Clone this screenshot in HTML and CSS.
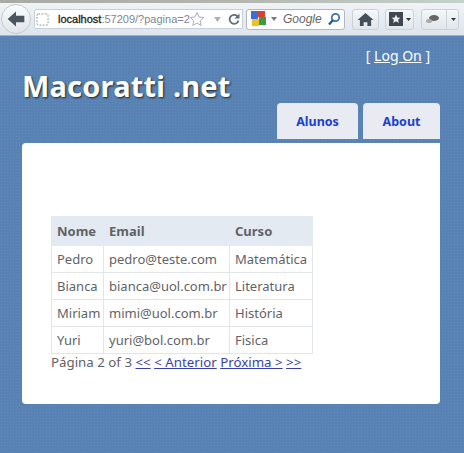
FILE: index.html
```html
<!DOCTYPE html>
<html lang="pt">
<head>
<meta charset="utf-8">
<title>Macoratti .net</title>
<link rel="stylesheet" href="styles.css">
</head>
<body>
<div class="tabstrip"></div>
<div class="toolbar">
  <div class="back"><svg width="20" height="20" viewBox="0 0 24 24"><path d="M2 12l10-9v5h10v8H12v5z" fill="#4a5560"/></svg></div>
  <div class="urlbar">
    <svg class="favicon" width="13" height="13" viewBox="0 0 14 14"><rect x="1" y="1" width="12" height="12" rx="1.5" fill="none" stroke="#8a8a8a" stroke-dasharray="2 1.5"/></svg>
    <div class="urlfield">
      <span class="url"><b>localhost</b>:57209/?pagina=2</span>
      <svg class="star" width="16" height="16" viewBox="0 0 16 16"><path d="M8 1.500l2 4.500 4.800.5-3.600 3.200 1 4.800L8 12l-4.200 2.500 1-4.800L1.200 6.500 6 6z" fill="#fff" stroke="#a8b0b8"/></svg>
      <svg class="drop" width="7" height="5" viewBox="0 0 8 6"><path d="M0 0h8L4 6z" fill="#a8b0b8"/></svg>
      <svg class="reload" width="12" height="12" viewBox="0 0 12 12"><path d="M10 4A4.500 4.500 0 1 0 10.500 7.500" fill="none" stroke="#5f6b76" stroke-width="1.800"/><path d="M11.500 0.500v5h-5z" fill="#5f6b76"/></svg>
    </div>
  </div>
  <div class="search">
    <svg width="18" height="18" viewBox="0 0 18 18"><rect x="1" y="1" width="7" height="8" fill="#3b6fd4"/><rect x="8" y="1" width="7" height="6" fill="#d8402f"/><rect x="9" y="7" width="7" height="8" fill="#3f9a3f"/><rect x="2" y="9" width="7" height="7" fill="#efc02c"/></svg>
    <svg class="sdrop" width="6" height="4" viewBox="0 0 6 4"><path d="M0 0h6L3 4z" fill="#777"/></svg>
    <span class="google">Google</span>
    <svg class="lens" width="14" height="14" viewBox="0 0 14 14"><circle cx="8.500" cy="5.500" r="3.700" fill="none" stroke="#3d73a8" stroke-width="1.800"/><path d="M6 8l-4 4.500" stroke="#2c5a88" stroke-width="2.400"/></svg>
  </div>
  <div class="tool home"><svg width="17" height="15" viewBox="0 0 18 16"><path d="M9 1L0.500 8.500H3V15h4v-4h4v4h4V8.500h2.500z" fill="#444f5a"/></svg></div>
  <div class="tool bookmarks"><svg width="14" height="14" viewBox="0 0 14 14"><rect width="14" height="14" fill="#3f4750"/><path d="M7 2.500l1.300 2.900 3.100.3-2.300 2.100.7 3.100L7 9.300 4.200 10.900l.7-3.100-2.300-2.100 3.100-.3z" fill="#eee"/></svg><svg width="5" height="3" viewBox="0 0 5 3"><path d="M0 0h5L2.500 3z" fill="#333"/></svg></div>
  <div class="tool addon"><svg width="16" height="14" viewBox="0 0 16 14"><ellipse cx="9" cy="6" rx="5" ry="3" fill="#666"/><ellipse cx="4" cy="9" rx="3" ry="2" fill="#aaa"/></svg><i class="sep"></i><svg width="5" height="3" viewBox="0 0 5 3"><path d="M0 0h5L2.500 3z" fill="#333"/></svg></div>
</div>
<div class="page">
  <div class="login">[ <a href="#">Log On</a> ]</div>
  <h1 class="brand">Macoratti .net</h1>
  <nav class="menu">
    <a class="tab tab-alunos" href="#">Alunos</a>
    <a class="tab tab-about" href="#">About</a>
  </nav>
  <main class="card">
    <table class="grid">
      <thead>
        <tr><th class="c1">Nome</th><th class="c2">Email</th><th class="c3">Curso</th></tr>
      </thead>
      <tbody>
        <tr><td>Pedro</td><td>pedro@teste.com</td><td>Matemática</td></tr>
        <tr><td>Bianca</td><td>bianca@uol.com.br</td><td>Literatura</td></tr>
        <tr><td>Miriam</td><td>mimi@uol.com.br</td><td>História</td></tr>
        <tr><td>Yuri</td><td>yuri@bol.com.br</td><td>Fisica</td></tr>
      </tbody>
    </table>
    <p class="pager">Página 2 of 3 <a href="#">&lt;&lt;</a> <a href="#">&lt; Anterior</a> <a href="#">Próxima &gt;</a> <a href="#">&gt;&gt;</a></p>
  </main>
</div>
</body>
</html>
```
FILE: styles.css
```css
* { box-sizing: border-box; }
html, body { margin: 0; padding: 0; }
body {
  width: 464px;
  height: 453px;
  overflow: hidden;
  font-family: "Noto Sans", "DejaVu Sans", sans-serif;
  background-color: #5782b3;
  background-image: radial-gradient(rgba(255,255,255,.07) 1px, transparent 1px);
  background-size: 3px 3px;
}
.tabstrip {
  height: 3px;
  background: linear-gradient(90deg, #a9a9a6 0, #b5b5b0 50%, #c4d2cb 100%);
}
.toolbar {
  height: 33px;
  display: flex;
  align-items: center;
  padding-left: 1px;
  background: linear-gradient(#f0f3f6, #dde5ec);
  border-bottom: 1px solid #9fb2c3;
}
.back {
  width: 30px;
  height: 30px;
  flex: none;
  border-radius: 50%;
  display: flex;
  align-items: center;
  justify-content: center;
  background: linear-gradient(#fbfcfd, #dfe5ea);
  border: 1px solid #c3ccd4;
}
.urlbar {
  display: flex;
  align-items: center;
  width: 209px;
  flex: none;
  margin-left: 3px;
  height: 20px;
  background: #fff;
  border: 1px solid #c5d0da;
  border-radius: 2px 0 0 2px;
}
.favicon { flex: none; margin: 0 4px 0 1px; }
.urlfield {
  flex: 1;
  height: 18px;
  display: flex;
  align-items: center;
  padding-left: 5px;
  font: 11px "Liberation Sans", sans-serif;
  color: #7b8794;
  min-width: 0;
}
.url { width: 126px; white-space: nowrap; flex: none; }
.url b { font-weight: normal; color: #222; -webkit-text-stroke: .3px #222; }
.star { margin-left: 5px; flex: none; }
.drop { margin-left: 9px; flex: none; }
.reload { margin-left: 7px; flex: none; }
.search {
  margin-left: 3px;
  width: 99px;
  height: 21px;
  display: flex;
  align-items: center;
  padding-left: 3px;
  background: #fff;
  border: 1px solid #aeb9c4;
  border-radius: 3px;
  flex: none;
}
.sdrop { margin-left: 3px; }
.google {
  font: italic 12px "Liberation Sans", sans-serif;
  color: #666;
  margin-left: 6px;
  flex: 1;
}
.lens { margin-right: 3px; }
.tool {
  height: 21px;
  flex: none;
  display: flex;
  align-items: center;
  justify-content: center;
  gap: 3px;
  border: 1px solid #c9d1d9;
  border-radius: 3px;
  background: linear-gradient(#f5f7f9, #e0e6ec);
}
.home { width: 27px; margin-left: 7px; }
.bookmarks { width: 29px; margin-left: 6px; }
.addon { width: 38px; margin-left: 7px; }
.sep { width: 1px; height: 19px; background: #c9d1d9; margin: 0 1px 0 2px; }

.page { padding: 0 24px 0 22px; }
.login {
  height: 36px;
  padding-top: 10px;
  padding-right: 10px;
  text-align: right;
  font-size: 14px;
  line-height: 20px;
  color: #fff;
}
.login a { color: #fff; }
.brand {
  margin: 0;
  height: 31px;
  font-size: 29px;
  line-height: 27px;
  font-weight: 700;
  letter-spacing: .2px;
  color: #fff;
  text-shadow: 1px 1px 2px #222;
}
.menu {
  display: flex;
  justify-content: flex-end;
  gap: 5px;
  height: 40px;
}
.tab {
  height: 36px;
  display: flex;
  align-items: center;
  justify-content: center;
  font-size: 12.500px;
  font-weight: 700;
  color: #1c3fd0;
  text-decoration: none;
  background: #e8ebf2;
  border-radius: 4px 4px 0 0;
}
.tab-alunos { width: 81px; }
.tab-about { width: 77px; }
.card {
  height: 261px;
  background: #fff;
  border-radius: 4px 0 4px 4px;
  padding: 73px 0 0 29px;
}
.grid {
  border-collapse: collapse;
  font-size: 13px;
  color: #5f6368;
  table-layout: fixed;
  width: 261px;
}
.grid th, .grid td {
  border: 1px solid #e3e6e8;
  padding: 0 5px;
  text-align: left;
  white-space: nowrap;
}
.grid th {
  height: 29px;
  background: #e4eaf1;
  font-weight: 700;
  border-color: #e4eaf1;
}
.grid td { height: 27px; }
.c1 { width: 52px; }
.c2 { width: 126px; }
.c3 { width: 83px; }
.pager {
  margin: 0;
  font-size: 13.300px;
  line-height: 16px;
  color: #5f6368;
}
.pager a { color: #3a3fa8; }
```
